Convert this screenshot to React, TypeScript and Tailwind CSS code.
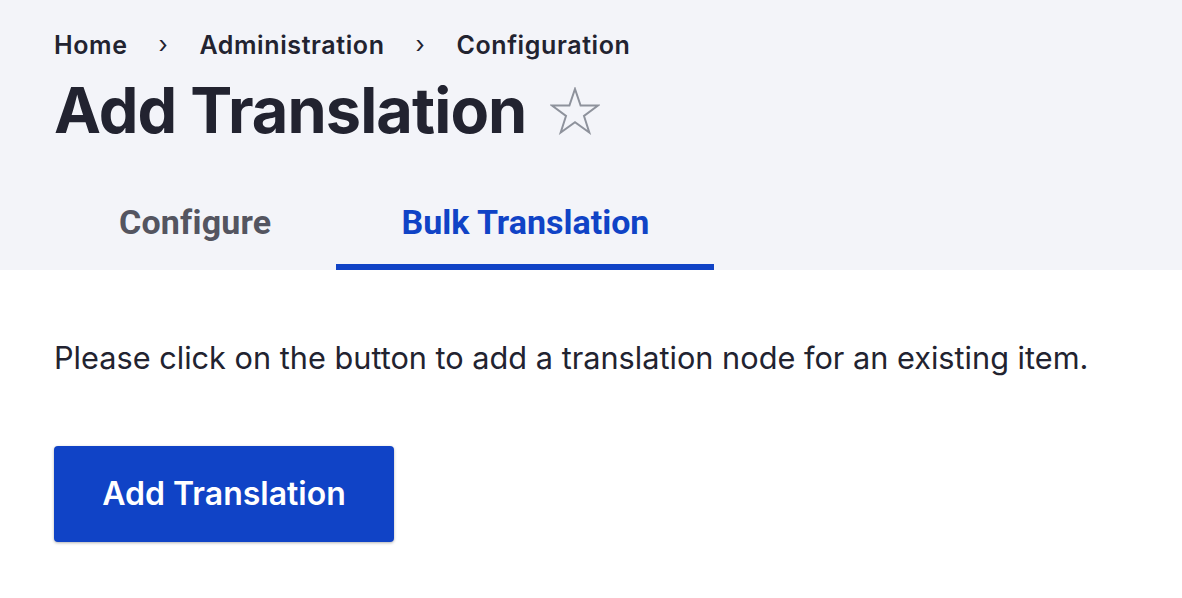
export default function App() {
  return (
    <div className="min-h-screen bg-white text-[#222330]" style={{ fontFamily: "Inter, 'Noto Sans', sans-serif" }}>
      <header className="bg-[#f3f4f9] px-[54px] pt-[28px]">
        <nav className="flex items-center text-[25px] font-semibold leading-[34px] tracking-[0.6px]">
          <span>Home</span>
          <span className="mx-[31px] text-[24px] font-normal">›</span>
          <span>Administration</span>
          <span className="mx-[31px] text-[24px] font-normal">›</span>
          <span>Configuration</span>
        </nav>
        <div className="mt-[10px] flex items-center">
          <h1 className="text-[63px] font-bold leading-[76px] tracking-[-0.9px]">Add Translation</h1>
          <svg className="ml-[24px] mt-[2px]" width="50" height="48" viewBox="0 0 50 48" fill="none">
            <path
              d="M25 2 L30.6 18.6 L48 18.6 L34 29 L39.3 45.5 L25 35.3 L10.7 45.5 L16 29 L2 18.6 L19.4 18.6 Z"
              stroke="#8e929c"
              strokeWidth="2"
              strokeLinejoin="miter"
            />
          </svg>
        </div>
        <div className="mt-[52px] flex" style={{ fontFamily: "Roboto, 'Liberation Sans', sans-serif" }}>
          <a className="block px-[65px] pb-[30px] pt-[4px] text-[34px] font-bold leading-[36px] tracking-[0.2px] text-[#545560]">
            Configure
          </a>
          <a className="block border-b-[6px] border-[#1043c6] px-[65px] pb-[24px] pt-[4px] text-[34px] font-bold leading-[36px] text-[#1043c6]">
            Bulk Translation
          </a>
        </div>
      </header>
      <main className="px-[54px] pt-[70px]">
        <p className="text-[30.7px] leading-[36px]">Please click on the button to add a translation node for an existing item.</p>
        <button className="mt-[70px] h-[96px] w-[340px] rounded-[4px] bg-[#1043c6] text-[32px] font-semibold text-white shadow-[0_1px_3px_rgba(0,0,0,0.3)]">
          Add Translation
        </button>
      </main>
    </div>
  );
}
